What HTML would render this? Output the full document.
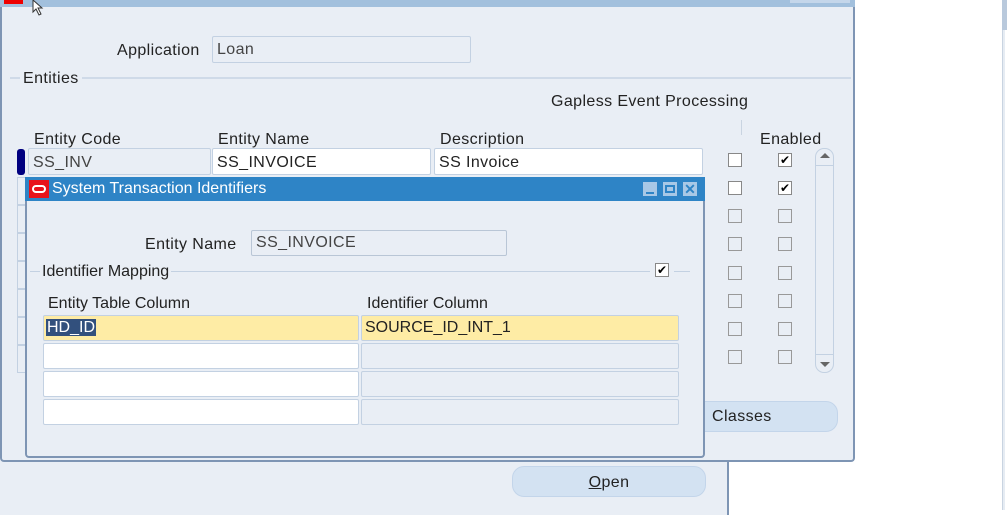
<!DOCTYPE html>
<html><head><style>
*{margin:0;padding:0;box-sizing:border-box}
body{width:1007px;height:510px;position:relative;overflow:hidden;background:#fff;font-family:"Liberation Sans",sans-serif;font-size:16px;letter-spacing:0.4px;color:#222}
.a{position:absolute}
.f{position:absolute;border:1px solid #c3d1e2;border-radius:2px;padding-left:4px;line-height:22px;height:25px}
.cb{position:absolute;width:14px;height:14px;border:1px solid #888;background:#fff;font-size:12px;line-height:12px;text-align:center;color:#000;letter-spacing:0}
.cb2{position:absolute;width:14px;height:14px;border:1px solid #999;background:#e9eef5}
.lbl{position:absolute;white-space:nowrap}
.d{letter-spacing:0}
</style></head><body>
<div class="a" style="left:0;top:455px;width:729px;height:60px;background:#e9eef5;border-right:2px solid #7e95b4"></div>
<div class="a" style="left:512px;top:466px;width:194px;height:31px;background:#d3e2f2;border:1px solid #c3d5ea;border-radius:12px;text-align:center;line-height:31px">
<span style="text-decoration:underline">O</span>pen</div>
<div class="a" style="left:1002px;top:0;width:3px;height:510px;background:#e6ecf3;border-left:1px solid #c9d4e1"></div>
<div class="a" style="left:1002px;top:0;width:5px;height:30px;background:#b9c9dc"></div>
<div class="a" style="left:0;top:0;width:855px;height:462px;background:#e9eef5;border:2px solid #7e95b4;border-top:none;border-radius:0 0 4px 4px"></div>
<div class="a" style="left:0;top:0;width:855px;height:7px;background:#a2c0dd"></div>
<div class="a" style="left:4px;top:0;width:19px;height:4px;background:#e00"></div>
<div class="a" style="left:790px;top:0;width:60px;height:3px;background:#c4d6ea"></div>
<div class="lbl" style="left:117px;top:42px">Application</div>
<div class="f" style="left:212px;top:36px;width:259px;height:27px;background:#e9eef5;line-height:25px;color:#444">Loan</div>
<div class="a" style="left:10px;top:77px;width:841px;height:2px;background:#cfdae8"></div>
<div class="lbl" style="left:20px;top:70px;background:#e9eef5;padding:0 3px">Entities</div>
<div class="lbl" style="left:551px;top:93px">Gapless Event Processing</div>
<div class="a" style="left:741px;top:120px;width:1px;height:15px;background:#c9d4e1"></div>
<div class="lbl" style="left:34px;top:131px">Entity Code</div>
<div class="lbl" style="left:218px;top:131px">Entity Name</div>
<div class="lbl" style="left:440px;top:131px">Description</div>
<div class="lbl" style="left:760px;top:131px">Enabled</div>
<div class="a" style="left:17px;top:149px;width:8px;height:26px;background:#000080;border-radius:3px"></div>
<div class="f" style="left:28px;top:148px;width:183px;height:27px;background:#e9eef5;color:#444;line-height:27px">SS_INV</div>
<div class="f" style="left:212px;top:148px;width:219px;height:27px;background:#fff;line-height:27px">SS_INVOICE</div>
<div class="f" style="left:434px;top:148px;width:269px;height:27px;background:#fff;line-height:27px">SS Invoice</div>
<div class="a" style="left:17px;top:177px;width:10px;height:196px;border:1px solid #c3d1e2;border-right:none;background:
repeating-linear-gradient(#e9eef5 0,#e9eef5 26px,#c3d1e2 26px,#c3d1e2 28px)"></div>
<div class="cb" style="left:728px;top:153px"></div><div class="cb" style="left:778px;top:153px">✔</div>
<div class="cb" style="left:728px;top:181px"></div><div class="cb" style="left:778px;top:181px">✔</div>
<div class="cb2" style="left:728px;top:209px"></div><div class="cb2" style="left:778px;top:209px"></div>
<div class="cb2" style="left:728px;top:237px"></div><div class="cb2" style="left:778px;top:237px"></div>
<div class="cb2" style="left:728px;top:266px"></div><div class="cb2" style="left:778px;top:266px"></div>
<div class="cb2" style="left:728px;top:294px"></div><div class="cb2" style="left:778px;top:294px"></div>
<div class="cb2" style="left:728px;top:322px"></div><div class="cb2" style="left:778px;top:322px"></div>
<div class="cb2" style="left:728px;top:350px"></div><div class="cb2" style="left:778px;top:350px"></div>
<div class="a" style="left:815px;top:148px;width:19px;height:225px;border:1px solid #c3d1e2;border-radius:9px;background:#e9eef5"></div>
<div class="a" style="left:816px;top:165px;width:17px;height:1px;background:#c3d1e2"></div>
<div class="a" style="left:816px;top:354px;width:17px;height:1px;background:#c3d1e2"></div>
<div class="a" style="left:820px;top:153px;width:0;height:0;border-left:5px solid transparent;border-right:5px solid transparent;border-bottom:5px solid #666"></div>
<div class="a" style="left:820px;top:362px;width:0;height:0;border-left:5px solid transparent;border-right:5px solid transparent;border-top:5px solid #666"></div>
<div class="a" style="left:690px;top:401px;width:148px;height:31px;background:#d3e2f2;border:1px solid #c3d5ea;border-radius:12px;padding-left:21px;line-height:30px">Classes</div>
<div class="a" style="left:25px;top:177px;width:680px;height:281px;background:#e9eef5;border:2px solid #7e95b4;border-top:none;border-radius:0 0 4px 4px"></div>
<div class="a" style="left:25px;top:177px;width:680px;height:24px;background:#2e84c6"></div>
<div class="a" style="left:29px;top:180px;width:20px;height:18px;background:#e8131b"></div>
<div class="a" style="left:32px;top:185px;width:14px;height:8px;border:2px solid #fff;border-radius:5px"></div>
<div class="lbl d" style="left:52px;top:180px;color:#fff">System Transaction Identifiers</div>
<div class="a" style="left:643px;top:182px;width:14px;height:14px;background:#a8c8e6"><div class="a" style="left:3px;top:10px;width:8px;height:2px;background:#2e84c6"></div></div>
<div class="a" style="left:663px;top:182px;width:14px;height:14px;background:#a8c8e6"><div class="a" style="left:2px;top:3px;width:10px;height:8px;border:2px solid #2e84c6"></div></div>
<div class="a" style="left:683px;top:182px;width:14px;height:14px;background:#a8c8e6;color:#2e84c6;font-size:14px;font-weight:bold;line-height:14px;text-align:center;letter-spacing:0">✕</div>
<div class="lbl" style="left:145px;top:236px">Entity Name</div>
<div class="f" style="left:251px;top:230px;width:256px;height:26px;background:#e9eef5;border-color:#b9c6d6;color:#444;line-height:24px">SS_INVOICE</div>
<div class="a" style="left:30px;top:271px;width:660px;height:1px;background:#c3d1e2"></div>
<div class="lbl d" style="left:40px;top:263px;background:#e9eef5;padding:0 2px">Identifier Mapping</div>
<div class="a" style="left:650px;top:262px;width:24px;height:16px;background:#e9eef5"></div>
<div class="cb" style="left:655px;top:263px">✔</div>
<div class="lbl d" style="left:48px;top:295px">Entity Table Column</div>
<div class="lbl d" style="left:367px;top:295px">Identifier Column</div>
<div class="f d" style="left:43px;top:315px;width:316px;height:26px;background:#feeca5;padding-left:2px;line-height:24px"><span style="background:#32507d;color:#fff;padding:0 1px">HD_ID</span></div>
<div class="f d" style="left:361px;top:315px;width:318px;height:26px;background:#feeca5;padding-left:3px;line-height:24px">SOURCE_ID_INT_1</div>
<div class="f" style="left:43px;top:343px;width:316px;height:26px;background:#fff"></div>
<div class="f" style="left:361px;top:343px;width:318px;height:26px;background:#e9eef5"></div>
<div class="f" style="left:43px;top:371px;width:316px;height:26px;background:#fff"></div>
<div class="f" style="left:361px;top:371px;width:318px;height:26px;background:#e9eef5"></div>
<div class="f" style="left:43px;top:399px;width:316px;height:26px;background:#fff"></div>
<div class="f" style="left:361px;top:399px;width:318px;height:26px;background:#e9eef5"></div>
<svg class="a" style="left:32px;top:0" width="18" height="18" viewBox="0 0 18 18"><path d="M1 0 L1 12 L4 9 L7 15 L9 14 L6 8 L10 8 Z" fill="#fff" stroke="#333" stroke-width="1"/></svg>
</body></html>
